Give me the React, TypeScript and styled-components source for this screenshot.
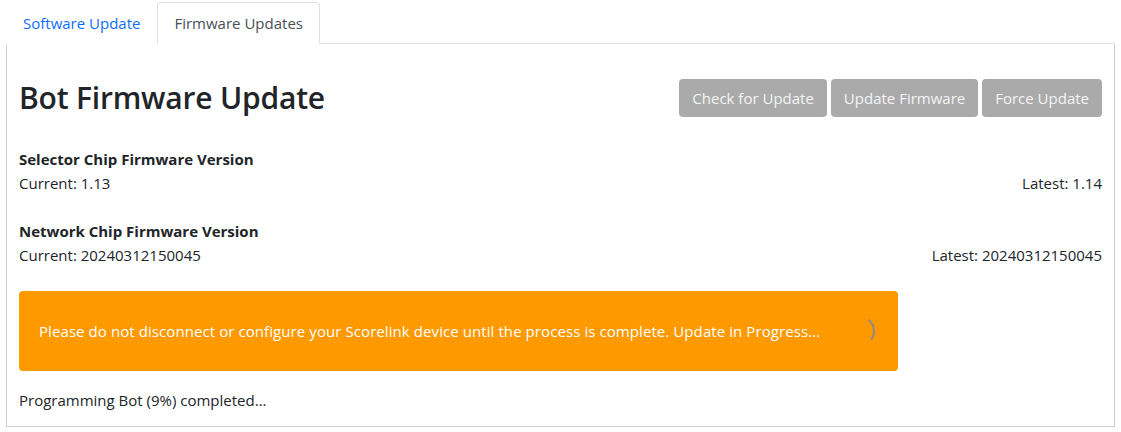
import React from 'react';
import styled, { createGlobalStyle } from 'styled-components';


// Style
const GlobalStyle = createGlobalStyle`
  html, body {
    margin: 0;
    padding: 0;
    background: #fff;
  }
  body {
    font-family: "Segoe UI", "Open Sans", "Noto Sans", sans-serif;
    font-size: 15px;
    line-height: 24px;
    color: #212529;
  }
`;

const Page = styled.div`
  padding: 2px 6px 0 6px;
  width: 1109px;
`;

const Tabs = styled.ul`
  display: flex;
  list-style: none;
  margin: 0;
  padding: 0;
  border-bottom: 1px solid #dee2e6;
`;

const Tab = styled.li<{ $active?: boolean }>`
  margin-bottom: -1px;
  padding: 8px 16px;
  border: 1px solid ${p => (p.$active ? '#dee2e6' : 'transparent')};
  border-bottom-color: ${p => (p.$active ? '#fff' : 'transparent')};
  border-radius: 4px 4px 0 0;
  background: #fff;
  color: ${p => (p.$active ? '#495057' : '#0d6efd')};
  cursor: pointer;
`;

const Card = styled.section`
  border: 1px solid #cfcfcf;
  border-top: none;
  padding: 35px 12px 14px 12px;
`;

const Header = styled.div`
  display: flex;
  justify-content: space-between;
  align-items: center;
  margin-bottom: 30px;
`;

const Title = styled.h2`
  margin: 0;
  font-size: 30px;
  font-weight: 600;
  line-height: 38px;
  letter-spacing: -0.2px;
`;

const Buttons = styled.div`
  display: flex;
  gap: 4px;
`;

const Button = styled.button`
  height: 38px;
  padding: 0 13px;
  border: none;
  border-radius: 4px;
  background: #aaaaaa;
  color: #f4f4f4;
  font-family: inherit;
  font-size: 15px;
`;

const Group = styled.div`
  margin-bottom: 24px;
`;

const GroupTitle = styled.div`
  font-weight: 700;
`;

const VersionRow = styled.div`
  display: flex;
  justify-content: space-between;
`;

const Notice = styled.div`
  display: flex;
  align-items: center;
  justify-content: space-between;
  width: 879px;
  height: 80px;
  box-sizing: border-box;
  padding: 0 23px 0 20px;
  border-radius: 4px;
  background: #ff9900;
  color: #fff;
  margin-bottom: 17px;
  letter-spacing: 0.08px;
`;

const Spinner = styled.div`
  width: 26px;
  height: 26px;
  border: 2px solid transparent;
  border-right-color: #8a8a8a;
  border-radius: 50%;
  transform: rotate(-8deg);
`;

const Status = styled.div``;


// Data
const versions = [
  { name: 'Selector Chip Firmware Version', current: '1.13', latest: '1.14' },
  { name: 'Network Chip Firmware Version', current: '20240312150045', latest: '20240312150045' },
];


// Component
function App() {
  return (
    <Page>
      <GlobalStyle />
      <Tabs>
        <Tab>Software Update</Tab>
        <Tab $active>Firmware Updates</Tab>
      </Tabs>
      <Card>
        <Header>
          <Title>Bot Firmware Update</Title>
          <Buttons>
            <Button disabled>Check for Update</Button>
            <Button disabled>Update Firmware</Button>
            <Button disabled>Force Update</Button>
          </Buttons>
        </Header>
        {versions.map(v => (
          <Group key={v.name}>
            <GroupTitle>{v.name}</GroupTitle>
            <VersionRow>
              <span>Current: {v.current}</span>
              <span>Latest: {v.latest}</span>
            </VersionRow>
          </Group>
        ))}
        <Notice>
          <span>Please do not disconnect or configure your Scorelink device until the process is complete. Update in Progress...</span>
          <Spinner />
        </Notice>
        <Status>Programming Bot (9%) completed...</Status>
      </Card>
    </Page>
  );
}

export default App;
